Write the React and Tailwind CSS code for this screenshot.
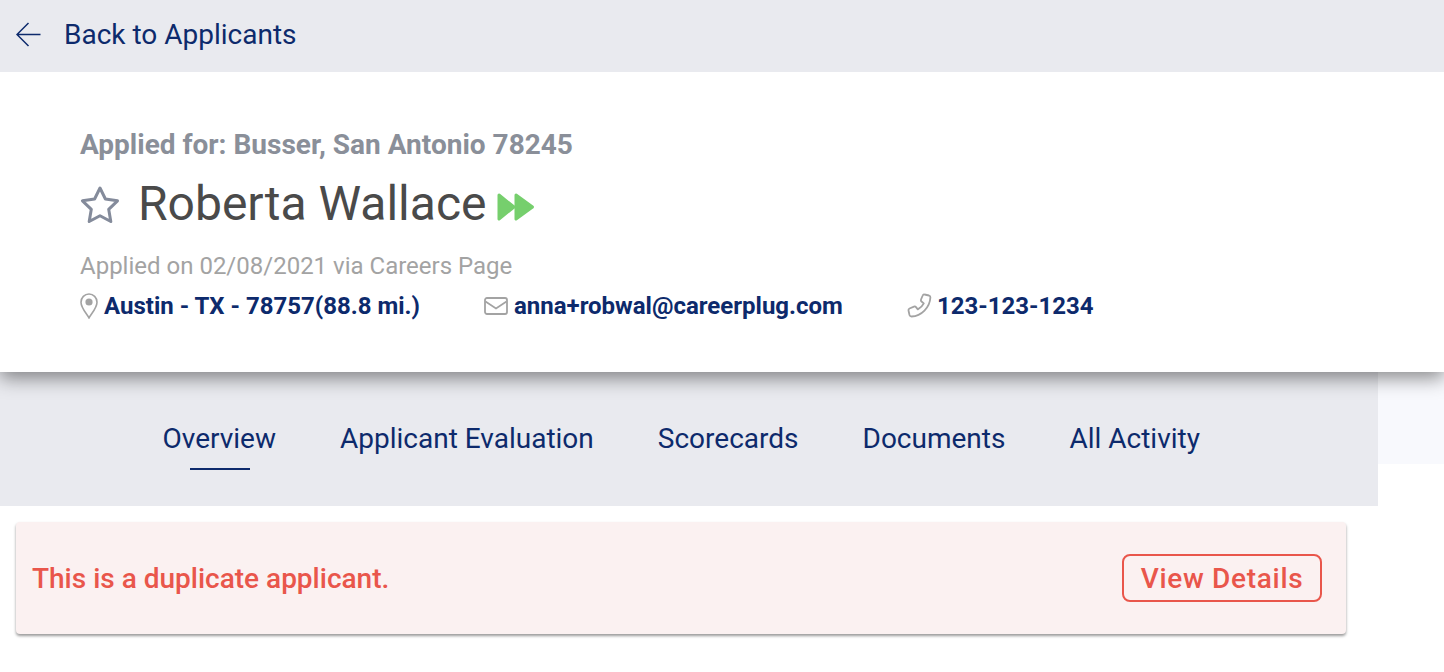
import React from 'react';

const tabs = ['Overview', 'Applicant Evaluation', 'Scorecards', 'Documents', 'All Activity'];

const App = () => {
  return (
    <div className="w-[1444px] h-[672px] overflow-hidden bg-white font-['Roboto',sans-serif]">
      {/* Back bar */}
      <div className="relative z-20 h-[72px] bg-[#e9eaef] flex items-center pl-[16px] text-[#0d2a6c]">
        <svg width="25" height="25" viewBox="0 0 25 25" fill="none" stroke="#0d2a6c" strokeWidth="1.5" className="mr-[23px] -mt-[3px]">
          <path d="M24.5 12.5H1M12.5 1L1 12.5L12.5 24" />
        </svg>
        <span className="text-[28px] leading-none -mt-[3px]">Back to Applicants</span>
      </div>

      {/* Applicant header */}
      <div className="relative z-10 h-[300px] bg-white pl-[80px] pt-[57px] shadow-[0_6px_18px_rgba(0,0,0,0.45)]">
        <div className="text-[28px] leading-[31px] font-bold text-[#8a8f99]">Applied for: Busser, San Antonio 78245</div>
        <div className="flex items-center h-[60px] mt-[15px]">
          <svg width="40" height="38" viewBox="0 0 40 38" fill="none" stroke="#848b9b" strokeWidth="3" strokeLinejoin="round" className="mr-[18px]">
            <path d="M20 2L25.4 13L37.5 14.8L28.7 23.3L30.8 35.5L20 29.7L9.2 35.5L11.3 23.3L2.5 14.8L14.6 13Z" />
          </svg>
          <span className="text-[48px] leading-none text-[#4a4a4a] -mt-[2px]">Roberta Wallace</span>
          <svg width="38" height="30" viewBox="0 0 38 30" fill="#76cf6d" stroke="#76cf6d" strokeWidth="3" strokeLinejoin="round" className="ml-[11px] mt-[4px]">
            <path d="M2 3L17 15L2 27Z" />
            <path d="M19 3L35.5 15L19 27Z" />
          </svg>
        </div>
        <div className="text-[24px] leading-[27px] text-[#a3a3a3] mt-[18px]">Applied on 02/08/2021 via Careers Page</div>
        <div className="flex items-center mt-[13px] text-[24px] leading-[27px] font-bold text-[#0d2a6c]">
          <svg width="18" height="26" viewBox="0 0 18 26" fill="none" stroke="#a3a3a3" strokeWidth="1.6" className="mr-[6px] -mt-[2px]">
            <path d="M9 25C7 21 1 15 1 9.2C1 4.6 4.6 1 9 1C13.4 1 17 4.6 17 9.2C17 15 11 21 9 25Z" />
            <circle cx="9" cy="9" r="3.6" fill="#a3a3a3" stroke="none" />
          </svg>
          <span>Austin - TX - 78757(88.8 mi.)</span>
          <svg width="24" height="18" viewBox="0 0 24 18" fill="none" stroke="#a3a3a3" strokeWidth="1.8" className="ml-[64px] mr-[6px] -mt-[2px]">
            <rect x="1" y="1" width="22" height="16" rx="2" />
            <path d="M1.5 4.5L12 11.5L22.5 4.5" />
          </svg>
          <span>anna+robwal@careerplug.com</span>
          <svg width="25" height="25" viewBox="0 0 25 25" fill="none" stroke="#a3a3a3" strokeWidth="1.8" strokeLinejoin="round" className="ml-[64px] mr-[5px] -mt-[2px]">
            <path d="M17.5 1.5L22 2.5C23 2.8 23.5 3.5 23.4 4.5C22.8 14.5 14.5 23 4.5 23.5C3.5 23.5 2.8 23 2.5 22L1.5 17.5C1.3 16.6 1.7 15.9 2.5 15.5L7 13.6C7.8 13.3 8.5 13.5 9 14.1L10.8 16.4C13.5 15 15.5 13 16.8 10.4L14.5 8.5C13.9 8 13.7 7.3 14 6.5L15.7 2.5C16 1.7 16.7 1.3 17.5 1.5Z" />
          </svg>
          <span>123-123-1234</span>
        </div>
      </div>

      {/* Tabs */}
      <div className="flex items-start">
        <div className="w-[1378px] h-[134px] bg-[#e9eaef] flex gap-[64px] pl-[162.5px] pt-[49px] shrink-0">
          {tabs.map((tab, i) => (
            <div key={tab} className="relative text-[28px] leading-[35px] text-[#0d2a6c]">
              {tab}
              {i === 0 && <div className="absolute left-[27px] right-[26px] top-[47px] h-[2px] bg-[#0d2a6c]"></div>}
            </div>
          ))}
        </div>
        <div className="flex-1 h-[92px] bg-[#f8f9fd]"></div>
      </div>

      {/* Duplicate alert */}
      <div className="w-[1330px] h-[112px] ml-[16px] mt-[16px] bg-[#fbf1f1] rounded-[4px] shadow-[0_2px_3px_rgba(0,0,0,0.4)] flex items-center justify-between pl-[16px] pr-[24px]">
        <span className="text-[28px] font-medium text-[#e9564b] mt-[2px]">This is a duplicate applicant.</span>
        <button className="w-[200px] h-[48px] border-2 border-[#e9564b] rounded-[8px] text-[28px] font-medium tracking-[0.7px] text-[#e9564b] pt-[1px]">View Details</button>
      </div>
    </div>
  );
};

export default App;
